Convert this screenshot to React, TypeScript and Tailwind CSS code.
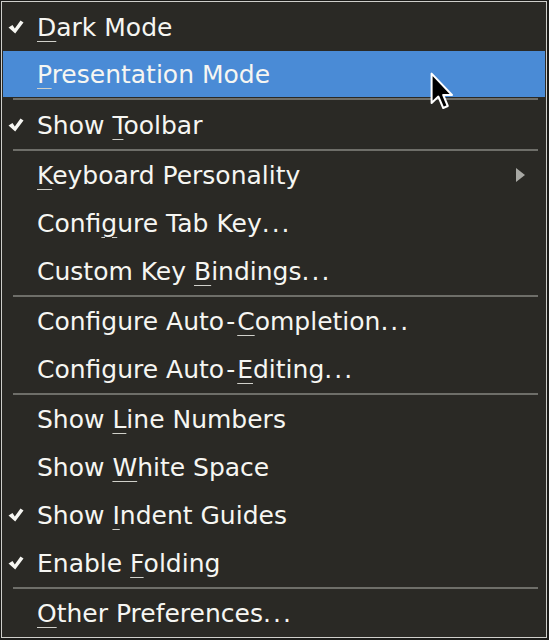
import React from "react";

type Item = {
  label: string;
  mn: number; // index of mnemonic letter
  checked?: boolean;
  highlight?: boolean;
  submenu?: boolean;
};

type Entry = Item | "sep";

const entries: Entry[] = [
  { label: "Dark Mode", mn: 0, checked: true },
  { label: "Presentation Mode", mn: 0, highlight: true },
  "sep",
  { label: "Show Toolbar", mn: 5, checked: true },
  "sep",
  { label: "Keyboard Personality", mn: 0, submenu: true },
  { label: "Configure Tab Key...", mn: 5 },
  { label: "Custom Key Bindings...", mn: 11 },
  "sep",
  { label: "Configure Auto-Completion...", mn: 15 },
  { label: "Configure Auto-Editing...", mn: 15 },
  "sep",
  { label: "Show Line Numbers", mn: 5 },
  { label: "Show White Space", mn: 5 },
  { label: "Show Indent Guides", mn: 5, checked: true },
  { label: "Enable Folding", mn: 7, checked: true },
  "sep",
  { label: "Other Preferences...", mn: 0 },
];

function Check() {
  return (
    <svg width="16" height="14" viewBox="0 0 16 14" className="absolute left-[5px] top-1/2 -translate-y-1/2">
      <path d="M0.5 7.5 L4.5 5 L6.8 8.5 L12.5 0.5 L15.5 2.5 L7.2 13.5 Z" fill="#f6f6f2" />
    </svg>
  );
}

function Seg({ text }: { text: string }) {
  const parts = text.split(/(\.\.\.|-)/);
  return (
    <>
      {parts.map((p, i) =>
        p === "..." ? (
          <span key={i} className="tracking-[2px]">{p}</span>
        ) : p === "-" ? (
          <span key={i} className="px-[2px]">{p}</span>
        ) : (
          <React.Fragment key={i}>{p}</React.Fragment>
        )
      )}
    </>
  );
}

function Row({ item }: { item: Item }) {
  const { label, mn } = item;
  return (
    <div
      className={
        "relative flex items-center mx-[1px] " +
        (item.highlight ? "h-[46px] bg-[#4a8bd6]" : "h-[48px]")
      }
    >
      {item.checked && <Check />}
      <span className="pl-[34px] text-[25px] leading-none text-[#f6f6f2] whitespace-pre">
        <Seg text={label.slice(0, mn)} />
        <span className="underline decoration-1 underline-offset-[5px] decoration-[#d0d0ca]">{label[mn]}</span>
        <Seg text={label.slice(mn + 1)} />
      </span>
      {item.submenu && (
        <svg width="9" height="14" viewBox="0 0 9 14" className="absolute right-[20px] top-1/2 -translate-y-1/2">
          <path d="M0 0 L9 7 L0 14 Z" fill="#a8a8a4" />
        </svg>
      )}
    </div>
  );
}

export default function App() {
  return (
    <div
      className="w-[549px] h-[640px] bg-[#1c1c1a] pl-[1px] pt-[1px] overflow-hidden"
      style={{ fontFamily: '"DejaVu Sans", "Liberation Sans", sans-serif' }}
    >
      <div className="relative w-[546px] h-[637px] border border-[#cfcfcb] bg-[#2a2925] pt-[1px] flex flex-col">
        {entries.map((e, i) =>
          e === "sep" ? (
            i === 2 ? (
              <div key={i} className="h-[4px] pt-[1px] pl-[11px] pr-[8px]">
                <div className="h-[2px] bg-[#6e6e69]" />
              </div>
            ) : (
              <div key={i} className="h-[2px] pl-[11px] pr-[8px]">
                <div className="h-[2px] bg-[#6e6e69]" />
              </div>
            )
          ) : (
            <Row key={i} item={e} />
          )
        )}
        <svg
          width="24"
          height="38"
          viewBox="0 0 12 19"
          className="absolute left-[428px] top-[70px]"
        >
          <path
            d="M0.8 0.8 L0.8 15.5 L4.2 12.3 L6.6 18 L8.9 17 L6.6 11.5 L11 11.5 Z"
            fill="#000"
            stroke="#fff"
            strokeWidth="1"
            strokeLinejoin="round"
          />
        </svg>
      </div>
    </div>
  );
}
